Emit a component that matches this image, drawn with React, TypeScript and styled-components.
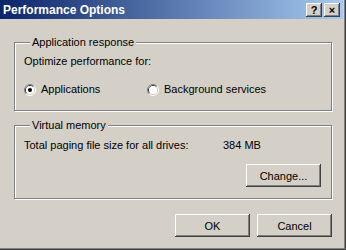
import React from "react";
import styled, { createGlobalStyle } from "styled-components";

const GlobalStyle = createGlobalStyle`
    html, body {
        margin: 0;
        padding: 0;
        background: #d4d0c8;
    }
    body {
        font-family: "Liberation Sans", Arial, sans-serif;
        font-size: 11px;
        color: #000;
    }
`;

const Window = styled.div`
    box-sizing: border-box;
    width: 346px;
    height: 250px;
    padding: 0 3px 2px 0;
    background: #d4d0c8;
    display: flex;
    flex-direction: column;
    box-shadow: inset -1px -1px 0 #404040, inset -2px -2px 0 #808080;
`;

const TitleBar = styled.div`
    height: 19px;
    display: flex;
    align-items: center;
    padding: 0 3px 0 3px;
    background: linear-gradient(to right, #0a246a, #a6caf0);
    color: #fff;
    font-weight: bold;
    font-size: 12px;
`;

const Caption = styled.span`
    flex: 1;
    white-space: nowrap;
`;

const CaptionButtons = styled.div`
    display: flex;
    gap: 2px;
`;

const CaptionButton = styled.div`
    width: 16px;
    height: 14px;
    box-sizing: border-box;
    display: flex;
    align-items: center;
    justify-content: center;
    background: #d4d0c8;
    color: #000;
    font-weight: bold;
    font-size: 11px;
    box-shadow: inset -1px -1px 0 #404040, inset 1px 1px 0 #fff,
        inset -2px -2px 0 #808080;
`;

const Body = styled.div`
    flex: 1;
    display: flex;
    flex-direction: column;
    padding: 17px 11px 0 14px;
`;

const GroupBox = styled.fieldset<{ $gap?: number; $top?: number; $bottom?: number }>`
    margin: 0 0 ${(p) => p.$gap ?? 0}px;
    min-width: 0;
    padding: ${(p) => p.$top ?? 6}px 10px ${(p) => p.$bottom ?? 14}px 9px;
    border: 1px solid #808080;
    box-shadow: 1px 1px 0 #fff, inset 1px 1px 0 #fff;
`;

const Legend = styled.legend`
    margin-left: 6px;
    padding: 0 2px;
    line-height: 13px;
    background: #d4d0c8;
`;

const Line = styled.div`
    line-height: 13px;
    white-space: nowrap;
`;

const OptionRow = styled.div`
    display: grid;
    grid-template-columns: 123px auto;
    margin-top: 15px;
`;

const Option = styled.label`
    display: flex;
    align-items: center;
    gap: 5px;
    line-height: 13px;
    white-space: nowrap;
`;

const InfoRow = styled.div`
    display: grid;
    grid-template-columns: 199px auto;
    line-height: 13px;
    white-space: nowrap;
`;

const ButtonRow = styled.div<{ $top: number }>`
    display: flex;
    justify-content: flex-end;
    gap: 7px;
    margin-top: ${(p) => p.$top}px;
`;

const Button = styled.button`
    width: 75px;
    height: 23px;
    padding: 0;
    border: none;
    background: #d4d0c8;
    font-family: inherit;
    font-size: 11px;
    color: #000;
    box-shadow: inset -1px -1px 0 #404040, inset 1px 1px 0 #fff,
        inset -2px -2px 0 #808080;
`;

const Radio = ({ checked }: { checked?: boolean }) => (
    <svg width="12" height="12" viewBox="0 0 12 12">
        <path d="M2.11 9.89 A5.5 5.5 0 0 1 9.89 2.11" stroke="#808080" fill="none" />
        <path d="M9.89 2.11 A5.5 5.5 0 0 1 2.11 9.89" stroke="#fff" fill="none" />
        <path d="M2.82 9.18 A4.5 4.5 0 0 1 9.18 2.82" stroke="#404040" fill="none" />
        <path d="M9.18 2.82 A4.5 4.5 0 0 1 2.82 9.18" stroke="#d4d0c8" fill="none" />
        <circle cx="6" cy="6" r="4" fill="#fff" />
        {checked && <circle cx="6" cy="6" r="2" fill="#000" />}
    </svg>
);

export default function App() {
    return (
        <>
            <GlobalStyle />
            <Window>
                <TitleBar>
                    <Caption>Performance Options</Caption>
                    <CaptionButtons>
                        <CaptionButton>?</CaptionButton>
                        <CaptionButton>×</CaptionButton>
                    </CaptionButtons>
                </TitleBar>
                <Body>
                    <GroupBox $gap={8}>
                        <Legend>Application response</Legend>
                        <Line>Optimize performance for:</Line>
                        <OptionRow>
                            <Option>
                                <Radio checked />
                                Applications
                            </Option>
                            <Option>
                                <Radio />
                                Background services
                            </Option>
                        </OptionRow>
                    </GroupBox>
                    <GroupBox $top={7} $bottom={11}>
                        <Legend>Virtual memory</Legend>
                        <InfoRow>
                            <span>Total paging file size for all drives:</span>
                            <span>384 MB</span>
                        </InfoRow>
                        <ButtonRow $top={12}>
                            <Button>Change...</Button>
                        </ButtonRow>
                    </GroupBox>
                    <ButtonRow $top={15}>
                        <Button>OK</Button>
                        <Button>Cancel</Button>
                    </ButtonRow>
                </Body>
            </Window>
        </>
    );
}
